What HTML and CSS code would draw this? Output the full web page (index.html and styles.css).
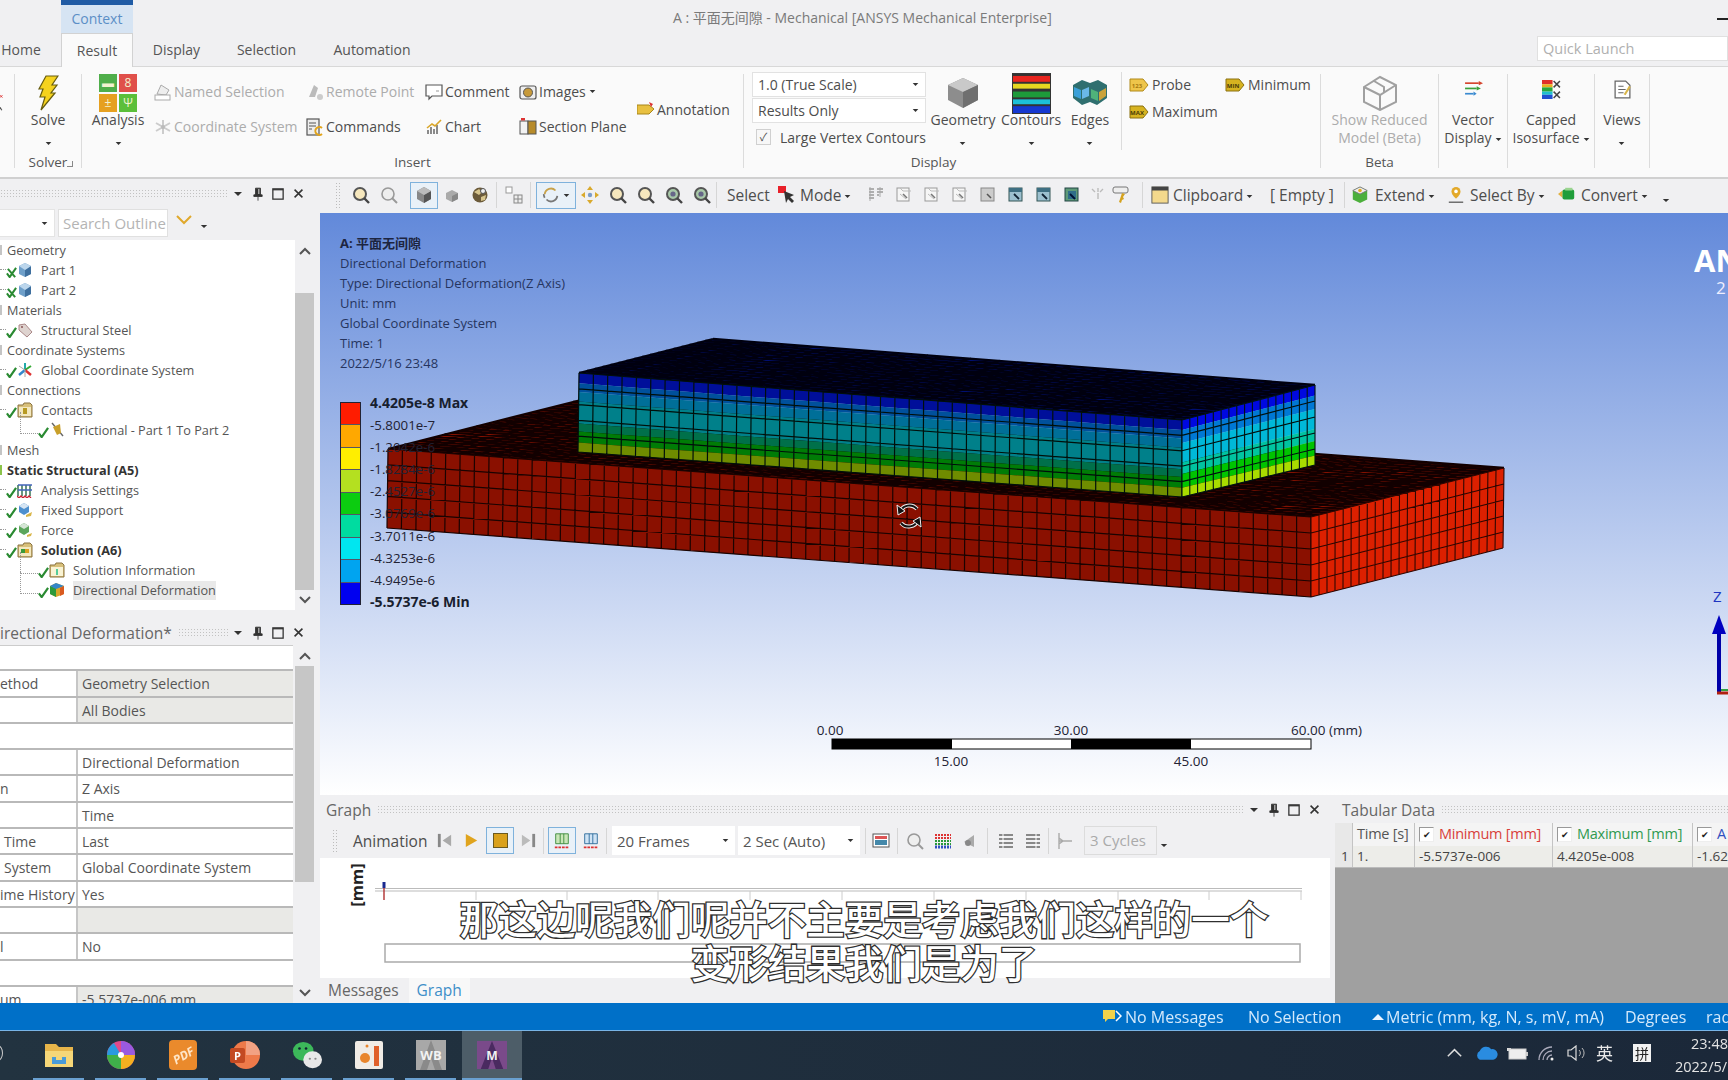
FILE: index.html
```html
<!DOCTYPE html>
<html lang="en">
<head>
<meta charset="utf-8">
<title>A : 平面无间隙 - Mechanical</title>
<link rel="stylesheet" href="styles.css">
</head>
<body>
<svg class="sprite" xmlns="http://www.w3.org/2000/svg">
  <symbol id="mag" viewBox="0 0 18 18"><circle cx="8" cy="8" r="6" fill="#f6e7bd" stroke="#555" stroke-width="2"/><path d="M12 12l5 5" stroke="#444" stroke-width="2.4"/></symbol>
  <symbol id="magg" viewBox="0 0 18 18"><circle cx="8" cy="8" r="6" fill="#eee" stroke="#999" stroke-width="1.6"/><path d="M12 12l5 5" stroke="#999" stroke-width="2"/></symbol>
  <symbol id="magb" viewBox="0 0 18 18"><circle cx="8" cy="8" r="6" fill="#a8c8a8" stroke="#555" stroke-width="2"/><circle cx="8" cy="8" r="2.6" fill="#668"/><path d="M12 12l5 5" stroke="#444" stroke-width="2.4"/></symbol>
  <symbol id="cube" viewBox="0 0 18 18"><path d="M9 1l7 4v8l-7 4-7-4V5z" fill="#888"/><path d="M9 9l7-4v8l-7 4z" fill="#555"/><path d="M9 1l7 4-7 4-7-4z" fill="#bbb"/></symbol>
  <symbol id="cubel" viewBox="0 0 18 18"><path d="M9 4l6 3v6l-6 3-6-3V7z" fill="#aaa"/><path d="M9 10l6-3v6l-6 3z" fill="#888"/></symbol>
  <symbol id="globe" viewBox="0 0 18 18"><circle cx="9" cy="9" r="7.5" fill="#6b5a3a"/><path d="M3 6l5-3 3 3-3 3zM10 11l5-2-1 5-4 1z" fill="#d7c58d"/><circle cx="12" cy="5" r="2.5" fill="#eee" stroke="#555"/></symbol>
  <symbol id="boxes" viewBox="0 0 18 18"><rect x="1" y="1" width="6" height="6" fill="#fff" stroke="#999"/><rect x="9" y="9" width="8" height="8" fill="#eee" stroke="#888"/><path d="M13 9v8M9 13h8" stroke="#888"/></symbol>
  <symbol id="rot" viewBox="0 0 20 20"><path d="M3 9a7 7 0 0 1 12-4" fill="none" stroke="#c8a24a" stroke-width="2"/><path d="M17 11a7 7 0 0 1-12 4" fill="none" stroke="#777" stroke-width="2"/><path d="M3 13a7 7 0 0 1-1-4" fill="none" stroke="#777" stroke-width="2"/></symbol>
  <symbol id="pan" viewBox="0 0 18 18"><path d="M9 0l3 4H6zM9 18l-3-4h6zM0 9l4-3v6zM18 9l-4 3V6z" fill="#d9a92c"/><circle cx="9" cy="9" r="2.2" fill="#7a9ccc"/></symbol>
  <symbol id="mode" viewBox="0 0 18 18"><rect x="0" y="0" width="8" height="7" fill="#e8202a"/><path d="M6 5l10 4-4 2 4 4-2 2-4-4-2 4z" fill="#333"/></symbol>
  <symbol id="sel" viewBox="0 0 18 18"><rect x="2" y="2" width="12" height="13" fill="#f6f6f6" stroke="#999"/><path d="M5 2l3 3h8M5 8l6 5" stroke="#bbb" fill="none"/><path d="M8 8l4 4" stroke="#777" stroke-width="1.6"/></symbol>
  <symbol id="selg" viewBox="0 0 18 18"><rect x="2" y="2" width="13" height="13" fill="#ccc" stroke="#888"/><path d="M8 8l4 4" stroke="#555" stroke-width="1.6"/></symbol>
  <symbol id="selb" viewBox="0 0 18 18"><rect x="2" y="2" width="13" height="13" fill="#9cc0cf" stroke="#355"/><rect x="2" y="2" width="13" height="4" fill="#3e6f82"/><path d="M7 8l5 5" stroke="#123" stroke-width="1.8"/></symbol>
  <symbol id="selgr" viewBox="0 0 18 18"><rect x="2" y="2" width="13" height="13" fill="#5d9a78" stroke="#244"/><rect x="5" y="5" width="8" height="8" fill="#2f6d89"/><path d="M7 8l5 5" stroke="#013" stroke-width="1.8"/></symbol>
  <symbol id="grid4" viewBox="0 0 18 18"><path d="M2 3h5M2 6h5M2 9h5M2 12h5M10 3h6M10 6h6M10 9h2" stroke="#999" stroke-width="1.4"/><path d="M3 1v14M13 1v10" stroke="#aaa"/></symbol>
  <symbol id="xyz" viewBox="0 0 18 18"><path d="M3 3l3 3M9 2v4M14 3l-3 3M9 7v6" stroke="#bbb" stroke-width="1.4"/></symbol>
  <symbol id="key" viewBox="0 0 18 18"><rect x="1" y="1" width="15" height="6" rx="2" fill="#eee" stroke="#777"/><path d="M10 7l-3 9 2 1 1-3 2-1-1-2 2-3z" fill="#d5a21e"/></symbol>
  <symbol id="clip" viewBox="0 0 20 20"><rect x="1" y="1" width="18" height="18" fill="#f4d98c" stroke="#555"/><rect x="1" y="1" width="18" height="4" fill="#444"/></symbol>
  <symbol id="extend" viewBox="0 0 20 20"><path d="M10 1l8 4v10l-8 4-8-4V5z" fill="#4caf3c"/><path d="M10 1l8 4-8 4-8-4z" fill="#eee" stroke="#777"/><circle cx="10" cy="5" r="2" fill="#e5a920"/></symbol>
  <symbol id="pin" viewBox="0 0 18 20"><path d="M9 1a5 5 0 0 1 5 5c0 4-5 8-5 8s-5-4-5-8a5 5 0 0 1 5-5z" fill="#e3a92a"/><circle cx="9" cy="6" r="2" fill="#fff"/><path d="M1 18h16" stroke="#555" stroke-width="1.4"/></symbol>
  <symbol id="conv" viewBox="0 0 20 18"><path d="M0 8l5-4v8z" fill="#e0b040"/><rect x="5" y="3" width="13" height="11" rx="2" fill="#1f9d3a"/><rect x="8" y="1" width="8" height="3" fill="#9ad48f"/></symbol>
  <symbol id="arrowd" viewBox="0 0 10 6"><path d="M1 1h8L5 5z" fill="#333"/></symbol>
  <symbol id="scup" viewBox="0 0 14 10"><path d="M2 8l5-5 5 5" fill="none" stroke="#555" stroke-width="2"/></symbol>
  <symbol id="scdn" viewBox="0 0 14 10"><path d="M2 2l5 5 5-5" fill="none" stroke="#555" stroke-width="2"/></symbol>
  <symbol id="pinbtn" viewBox="0 0 12 16"><path d="M3 1h6v8H3zM1 9h10v2H1zM6 11v5" fill="#333" stroke="#333"/><path d="M7 2v6" stroke="#fff"/></symbol>
  <symbol id="maxb" viewBox="0 0 14 14"><rect x="1" y="1" width="12" height="12" fill="none" stroke="#333" stroke-width="1.5"/><path d="M1 2h12" stroke="#333" stroke-width="1.5"/></symbol>
  <symbol id="closeb" viewBox="0 0 14 14"><path d="M2 2l10 10M12 2L2 12" stroke="#333" stroke-width="2"/></symbol>
  <symbol id="ck" viewBox="0 0 12 12"><path d="M1 7l3 4 7-10" fill="none" stroke="#2a8a32" stroke-width="2.4"/></symbol>
  <symbol id="ckx" viewBox="0 0 12 12"><path d="M1 7l3 4 7-10M2 2l8 9" fill="none" stroke="#2a8a32" stroke-width="2.2"/></symbol>
  <symbol id="part" viewBox="0 0 16 16"><path d="M8 1l6 3v8l-6 3-6-3V4z" fill="#6e9fc9"/><path d="M8 8l6-4v8l-6 3z" fill="#3e6f9e"/><path d="M8 1l6 3-6 4-6-4z" fill="#bcd6ec"/></symbol>
  <symbol id="tag" viewBox="0 0 16 16"><path d="M2 3l6-1 7 8-5 5-8-7z" fill="#ded3cf" stroke="#a88" stroke-width="1"/><circle cx="5" cy="5" r="1" fill="#855"/></symbol>
  <symbol id="coord" viewBox="0 0 16 16"><path d="M8 8V1" stroke="#2aa" stroke-width="2"/><path d="M8 8l6-4" stroke="#3a3" stroke-width="2"/><path d="M8 8l6 5" stroke="#d33" stroke-width="2.4"/><path d="M8 8l-6 5" stroke="#38c" stroke-width="2.4"/><path d="M8 8L2 4M8 8v7" stroke="#aaa"/></symbol>
  <symbol id="fcontact" viewBox="0 0 16 16"><path d="M1 3h5l1-2h6l2 2v12H1z" fill="#d8c07a" stroke="#8a7340"/><rect x="2" y="5" width="12" height="9" fill="#f3e8c0"/><rect x="6" y="6" width="4" height="6" fill="#b79a22"/></symbol>
  <symbol id="fsol" viewBox="0 0 16 16"><path d="M1 3h5l1-2h6l2 2v12H1z" fill="#d8c07a" stroke="#8a7340"/><rect x="2" y="5" width="12" height="9" fill="#f3e8c0"/><rect x="4" y="7" width="4" height="4" fill="#3a9a3a"/><rect x="8" y="7" width="4" height="4" fill="#d8a020"/></symbol>
  <symbol id="finfo" viewBox="0 0 16 16"><path d="M1 3h5l1-2h6l2 2v12H1z" fill="#d8c07a" stroke="#8a7340"/><rect x="2" y="5" width="12" height="9" fill="#f9f3d4"/><rect x="7" y="7" width="2" height="6" fill="#5c9"/></symbol>
  <symbol id="contact" viewBox="0 0 16 16"><path d="M3 1l11 13" stroke="#666" stroke-width="1.4"/><path d="M4 5l7-3 1 9-4 2z" fill="#c9a02a"/></symbol>
  <symbol id="settings" viewBox="0 0 16 16"><path d="M1 3v11M5 3v11M9 3v11M13 3v11" stroke="#2b6a4a" stroke-width="1.4"/><path d="M1 3h14M1 8h14" stroke="#4466bb" stroke-width="1.4"/><path d="M0 14l2 2 2-2 2 2 2-2 2 2 2-2 2 2" fill="none" stroke="#c23" stroke-width="1.3"/></symbol>
  <symbol id="fixed" viewBox="0 0 16 16"><path d="M7 1l5 3v6l-5 3-5-3V4z" fill="#4d8fce"/><path d="M7 1l5 3-5 3-5-3z" fill="#d6e5f3"/><path d="M9 13l6-3-1 4-5 1z" fill="#d9b64a"/></symbol>
  <symbol id="force" viewBox="0 0 16 16"><path d="M7 1l5 3v6l-5 3-5-3V4z" fill="#5ba55b"/><path d="M7 1l5 3-5 3-5-3z" fill="#d6e5d6"/><path d="M10 13l5-2-1 3-4 1z" fill="#d9b64a"/></symbol>
  <symbol id="deform" viewBox="0 0 16 16"><path d="M7 1l8 3v8l-8 3-6-3V4z" fill="#d9a62a"/><path d="M1 4l6 2v9l-6-3z" fill="#2d9a3a"/><path d="M7 1l8 3-8 3-6-3z" fill="#3486c8"/><path d="M11 6l4-2v8l-4 2z" fill="#d95a20"/></symbol>
</svg>

<div class="app">
  <header class="titlebar">
    <div class="ctx">Context</div>
    <div class="wintitle">A : 平面无间隙 - Mechanical [ANSYS Mechanical Enterprise]</div>
    <div class="minbtn"></div>
  </header>
  <nav class="tabs">
    <div class="tab w-home">Home</div>
    <div class="tab active w-result">Result</div>
    <div class="tab w-display">Display</div>
    <div class="tab w-selection">Selection</div>
    <div class="tab w-automation">Automation</div>
    <div class="quick">Quick Launch</div>
  </nav>

  <section class="ribbon">
    <div class="group g-stub"><svg class="stubmag" viewBox="0 0 10 30"><path d="M0 2l4 4M4 2L0 6" stroke="#d33" stroke-width="1.6"/><path d="M0 22l3 5" stroke="#555" stroke-width="2"/></svg></div>
    <div class="vsep"></div>
    <div class="group g-solve">
      <div class="gbody">
        <div class="big w-full">
          <div class="bigicon"><svg class="i-bolt" viewBox="0 0 22 36"><path d="M9 1h12l-6 9h5l-6 8h4L4 35l4-13H3l3-8H2z" fill="#f5d21e" stroke="#665c10" stroke-width="1.2"/></svg></div>
          <div class="biglabel">Solve<svg class="caret cdrop"><use href="#arrowd"/></svg></div>
        </div>
      </div>
      <div class="glabel">Solver<span class="launch"></span></div>
    </div>
    <div class="vsep"></div>
    <div class="group g-insert">
      <div class="gbody">
        <div class="big w-analysis">
          <div class="bigicon"><div class="tiles"><i class="tile t-g">▬</i><i class="tile t-r">8</i><i class="tile t-o">±</i><i class="tile t-g2">Ψ</i></div></div>
          <div class="biglabel">Analysis<svg class="caret cdrop"><use href="#arrowd"/></svg></div>
        </div>
        <div class="smalls">
          <div class="sm dis"><svg class="si" viewBox="0 0 18 18"><path d="M3 11l4-9 8 5-3 5z" fill="#eee" stroke="#aaa"/><rect x="1" y="12" width="15" height="5" fill="#fff" stroke="#aaa"/></svg>Named Selection</div>
          <div class="sm dis"><svg class="si" viewBox="0 0 18 18"><path d="M3 14L8 2l4 3-3 9z" fill="#bbb"/><circle cx="14" cy="14" r="3" fill="#ccc"/></svg>Remote Point</div>
          <div class="sm"><svg class="si" viewBox="0 0 18 18"><path d="M1 2h16v11H7l-3 3v-3H1z" fill="#fff" stroke="#555" stroke-width="1.2"/><path d="M11 8h3" stroke="#999"/></svg>Comment</div>
          <div class="sm"><svg class="si" viewBox="0 0 18 18"><rect x="1" y="3" width="16" height="13" rx="2" fill="#eee" stroke="#555" stroke-width="1.2"/><circle cx="9" cy="9.5" r="4.5" fill="#c79a3a" stroke="#555"/></svg>Images<svg class="caret"><use href="#arrowd"/></svg></div>
          <div class="annot"><svg class="si" viewBox="0 0 18 18"><path d="M0 5h12l5 4-5 5H0z" fill="#e8c040" stroke="#a8861a"/><path d="M12 2l4 2-2 3z" fill="#d33"/></svg>Annotation</div>
          <div class="sm dis"><svg class="si" viewBox="0 0 18 18"><path d="M9 2v14M2 5l14 8M16 5L2 13" stroke="#ccc" stroke-width="2"/><circle cx="9" cy="9" r="2" fill="#bbb"/></svg>Coordinate System</div>
          <div class="sm"><svg class="si" viewBox="0 0 18 18"><rect x="1" y="1" width="12" height="16" fill="#eee" stroke="#555" stroke-width="1.2"/><path d="M3 5h7M3 8h7M3 11h3" stroke="#555"/><path d="M16 10a4 4 0 1 0 0 6" fill="none" stroke="#e2a41b" stroke-width="2"/></svg>Commands</div>
          <div class="sm"><svg class="si" viewBox="0 0 18 18"><path d="M3 16v-4M6 16v-7M9 16v-5M12 16V7" stroke="#666" stroke-width="1.5"/><path d="M2 10l5-4 3 2 6-6" fill="none" stroke="#d9a62a" stroke-width="1.6"/></svg>Chart</div>
          <div class="sm"><svg class="si" viewBox="0 0 18 18"><rect x="1" y="3" width="8" height="13" fill="#f2f2f2" stroke="#555"/><rect x="9" y="3" width="8" height="13" fill="#b78b2a" stroke="#555"/><path d="M2 1h4" stroke="#d33" stroke-width="3"/></svg>Section Plane</div>
        </div>
      </div>
      <div class="glabel lbl-insert">Insert</div>
    </div>
    <div class="vsep"></div>
    <div class="group g-display">
      <div class="gbody">
        <div class="combos">
          <div class="combo">1.0 (True Scale)<svg class="caret end"><use href="#arrowd"/></svg></div>
          <div class="combo">Results Only<svg class="caret end"><use href="#arrowd"/></svg></div>
          <label class="chk"><span class="cbox">✓</span>Large Vertex Contours</label>
        </div>
        <div class="big w-geom">
          <div class="bigicon"><svg class="i-geom" viewBox="0 0 32 30"><path d="M16 0l15 7v15l-15 8-15-8V7z" fill="#8d8d8d"/><path d="M16 0l15 7-15 7L1 7z" fill="#c9c9c9"/><path d="M16 14l15-7v15l-15 8z" fill="#6f6f6f"/></svg></div>
          <div class="biglabel">Geometry<svg class="caret cdrop"><use href="#arrowd"/></svg></div>
        </div>
        <div class="big w-cont">
          <div class="bigicon"><svg class="i-cont" viewBox="0 0 40 42"><rect width="40" height="42" fill="#333"/><rect x="1" y="3" width="38" height="6" fill="#e8251f"/><rect x="1" y="11" width="38" height="5" fill="#e6d820"/><rect x="1" y="19" width="38" height="6" fill="#1d9a3a"/><rect x="1" y="27" width="38" height="5" fill="#1cc0d8"/><rect x="1" y="34" width="38" height="7" fill="#1638d0"/></svg></div>
          <div class="biglabel">Contours<svg class="caret cdrop"><use href="#arrowd"/></svg></div>
        </div>
        <div class="big w-edges">
          <div class="bigicon"><svg class="i-edges" viewBox="0 0 36 30"><path d="M10 2l8 3 8-3 9 5v13l-10 7-7-3-8 3L1 20V7z" fill="#2f6f6f"/><path d="M2 9l7 3v9l-7-3z" fill="#3aa0d8"/><path d="M10 12l7-3v9l-7 3z" fill="#6ab8e8"/><path d="M19 11l7 3v9l-7-3z" fill="#4fb27a"/><path d="M27 14l7-4v8l-7 5z" fill="#c9a23a"/></svg></div>
          <div class="biglabel">Edges<svg class="caret cdrop"><use href="#arrowd"/></svg></div>
        </div>
      </div>
      <div class="glabel lbl-display">Display</div>
    </div>
    <div class="vsep short"></div>
    <div class="group g-results">
      <div class="probes">
        <div class="sm"><svg class="si2" viewBox="0 0 20 16"><path d="M1 2h13l5 6-5 6H1z" fill="#efc54a" stroke="#b08a1a"/><text class="tagt" x="8" y="11" text-anchor="middle" fill="#a87a10">123</text></svg>Probe</div>
        <div class="sm"><svg class="si2" viewBox="0 0 20 16"><path d="M1 2h13l5 6-5 6H1z" fill="#d7b320" stroke="#8a7010"/><text class="tagt" x="8" y="11" text-anchor="middle" fill="#4a3c08">MIN</text></svg>Minimum</div>
        <div class="sm"><svg class="si2" viewBox="0 0 20 16"><path d="M1 2h13l5 6-5 6H1z" fill="#d7b320" stroke="#8a7010"/><text class="tagt" x="8" y="11" text-anchor="middle" fill="#4a3c08">MAX</text></svg>Maximum</div>
      </div>
    </div>
    <div class="vsep"></div>
    <div class="group g-beta">
      <div class="gbody">
        <div class="big w-full">
          <div class="bigicon"><svg class="i-red" viewBox="0 0 36 36"><path d="M2 12L18 2l16 8v17L18 35 2 27zM2 12l16 8 16-10M18 20v15M12 6l10 6v6" fill="none" stroke="#a0a0a0" stroke-width="2"/></svg></div>
          <div class="biglabel dis">Show Reduced<br>Model (Beta)</div>
        </div>
      </div>
      <div class="glabel">Beta</div>
    </div>
    <div class="vsep"></div>
    <div class="group g-vector">
      <div class="gbody">
        <div class="big w-full">
          <div class="bigicon"><svg class="i-sm" viewBox="0 0 18 16"><path d="M1 2h13" stroke="#d5452e" stroke-width="1.6"/><path d="M14 0l4 2-4 2z" fill="#d5452e"/><path d="M1 7h11" stroke="#3aa03a" stroke-width="1.6"/><path d="M12 5l4 2-4 2z" fill="#3aa03a"/><path d="M1 12h8" stroke="#3a8ad0" stroke-width="1.6"/><path d="M9 10l3 2-3 2z" fill="#3a8ad0"/></svg></div>
          <div class="biglabel">Vector<br>Display<svg class="caret"><use href="#arrowd"/></svg></div>
        </div>
      </div>
    </div>
    <div class="vsep"></div>
    <div class="group g-capped">
      <div class="gbody">
        <div class="big w-full">
          <div class="bigicon"><svg class="i-sm" viewBox="0 0 18 18"><rect x="0" y="0" width="10" height="4" fill="#e0302a"/><rect x="0" y="4" width="10" height="3" fill="#e8b020"/><rect x="0" y="7" width="10" height="4" fill="#2aa83a"/><rect x="0" y="11" width="10" height="3" fill="#20c0d0"/><rect x="0" y="14" width="10" height="4" fill="#2050d0"/><path d="M11 1l6 6M17 1l-6 6M11 11l6 6M17 11l-6 6" stroke="#444" stroke-width="1.4"/></svg></div>
          <div class="biglabel">Capped<br>Isosurface<svg class="caret"><use href="#arrowd"/></svg></div>
        </div>
      </div>
    </div>
    <div class="vsep"></div>
    <div class="group g-views">
      <div class="gbody">
        <div class="big w-full">
          <div class="bigicon"><svg class="i-sm" viewBox="0 0 18 18"><path d="M2 1h10l4 4v12H2z" fill="#fff" stroke="#666" stroke-width="1.2"/><path d="M5 6h5M5 9h7M5 12h5" stroke="#666"/><path d="M16 6l-5 8" stroke="#d9b64a" stroke-width="2"/></svg></div>
          <div class="biglabel">Views<svg class="caret cdrop"><use href="#arrowd"/></svg></div>
        </div>
      </div>
    </div>
    <div class="vsep"></div>
  </section>

  <main class="main">
    <aside class="left">
      <div class="phead ph-outline">
        <div class="grip"></div>
        <svg class="pb-caret"><use href="#arrowd"/></svg>
        <svg class="pb-pin"><use href="#pinbtn"/></svg>
        <svg class="pb-max"><use href="#maxb"/></svg>
        <svg class="pb-close"><use href="#closeb"/></svg>
      </div>
      <div class="filter">
        <div class="fcombo"><svg class="caret end"><use href="#arrowd"/></svg></div>
        <div class="fsearch">Search Outline</div>
        <svg class="chev" viewBox="0 0 16 10"><path d="M1 1l7 7 7-7" fill="none" stroke="#e0a92c" stroke-width="2"/></svg>
        <svg class="fover"><use href="#arrowd"/></svg>
      </div>
      <div class="treewrap">
        <div class="tree">
          <div class="row l0"><i class="nub"></i>Geometry</div>
          <div class="row l1"><i class="dash"></i><svg class="st"><use href="#ckx"/></svg><svg class="ni"><use href="#part"/></svg>Part 1</div>
          <div class="row l1"><i class="dash"></i><svg class="st"><use href="#ckx"/></svg><svg class="ni"><use href="#part"/></svg>Part 2</div>
          <div class="row l0"><i class="nub"></i>Materials</div>
          <div class="row l1"><i class="dash"></i><svg class="st"><use href="#ck"/></svg><svg class="ni"><use href="#tag"/></svg>Structural Steel</div>
          <div class="row l0"><i class="nub"></i>Coordinate Systems</div>
          <div class="row l1"><i class="dash"></i><svg class="st"><use href="#ck"/></svg><svg class="ni"><use href="#coord"/></svg>Global Coordinate System</div>
          <div class="row l0"><i class="nub"></i>Connections</div>
          <div class="row l1"><i class="dash"></i><svg class="st"><use href="#ck"/></svg><svg class="ni"><use href="#fcontact"/></svg>Contacts</div>
          <div class="row l2"><i class="dash2"></i><svg class="st"><use href="#ck"/></svg><svg class="ni"><use href="#contact"/></svg>Frictional - Part 1 To Part 2</div>
          <div class="row l0"><i class="nub"></i>Mesh</div>
          <div class="row l0 bold"><i class="nub g"></i>Static Structural (A5)</div>
          <div class="row l1"><i class="dash"></i><svg class="st"><use href="#ck"/></svg><svg class="ni"><use href="#settings"/></svg>Analysis Settings</div>
          <div class="row l1"><i class="dash"></i><svg class="st"><use href="#ck"/></svg><svg class="ni"><use href="#fixed"/></svg>Fixed Support</div>
          <div class="row l1"><i class="dash"></i><svg class="st"><use href="#ck"/></svg><svg class="ni"><use href="#force"/></svg>Force</div>
          <div class="row l1 bold"><i class="dash"></i><svg class="st"><use href="#ck"/></svg><svg class="ni"><use href="#fsol"/></svg>Solution (A6)</div>
          <div class="row l2"><i class="dash2"></i><svg class="st"><use href="#ck"/></svg><svg class="ni"><use href="#finfo"/></svg>Solution Information</div>
          <div class="row l2"><i class="dash2"></i><svg class="st"><use href="#ck"/></svg><svg class="ni"><use href="#deform"/></svg><span class="picked">Directional Deformation</span></div>
        </div>
        <div class="scroll sc-tree"><div class="sbtn"><svg class="schev"><use href="#scup"/></svg></div><div class="track"><div class="thumb th-tree"></div></div><div class="sbtn"><svg class="schev"><use href="#scdn"/></svg></div></div>
      </div>

      <div class="phead ph-detail">
        <div class="ptitle">irectional Deformation*</div>
        <div class="grip"></div>
        <svg class="pb-caret"><use href="#arrowd"/></svg>
        <svg class="pb-pin"><use href="#pinbtn"/></svg>
        <svg class="pb-max"><use href="#maxb"/></svg>
        <svg class="pb-close"><use href="#closeb"/></svg>
      </div>
      <div class="detailwrap">
        <div class="details">
          <div class="drow span"></div>
          <div class="drow"><div class="dl">ethod</div><div class="dv gr">Geometry Selection</div></div>
          <div class="drow"><div class="dl"></div><div class="dv gr">All Bodies</div></div>
          <div class="drow span"></div>
          <div class="drow"><div class="dl"></div><div class="dv">Directional Deformation</div></div>
          <div class="drow"><div class="dl">n</div><div class="dv">Z Axis</div></div>
          <div class="drow"><div class="dl"></div><div class="dv">Time</div></div>
          <div class="drow"><div class="dl ind">Time</div><div class="dv">Last</div></div>
          <div class="drow"><div class="dl ind">System</div><div class="dv">Global Coordinate System</div></div>
          <div class="drow"><div class="dl">ime History</div><div class="dv">Yes</div></div>
          <div class="drow"><div class="dl"></div><div class="dv gr"></div></div>
          <div class="drow"><div class="dl">l</div><div class="dv">No</div></div>
          <div class="drow span"></div>
          <div class="drow"><div class="dl">um</div><div class="dv gr">-5.5737e-006 mm</div></div>
        </div>
        <div class="scroll sc-detail"><div class="sbtn"><svg class="schev"><use href="#scup"/></svg></div><div class="track"><div class="thumb th-detail"></div></div><div class="sbtn"><svg class="schev"><use href="#scdn"/></svg></div></div>
      </div>
    </aside>

    <section class="right">
      <div class="toolbar">
        <div class="vgrip"></div>
        <div class="tb"><svg class="ti"><use href="#mag"/></svg></div>
        <div class="tb"><svg class="ti"><use href="#magg"/></svg></div>
        <div class="tb on m7"><svg class="ti"><use href="#cube"/></svg></div>
        <div class="tb"><svg class="ti"><use href="#cubel"/></svg></div>
        <div class="tb"><svg class="ti"><use href="#globe"/></svg></div>
        <div class="tsep ts-0"></div>
        <div class="tb n18 m8"><svg class="ti"><use href="#boxes"/></svg></div>
        <div class="tsep ts-a"></div>
        <div class="tb on w40"><svg class="ti"><use href="#rot"/></svg><svg class="caret"><use href="#arrowd"/></svg></div>
        <div class="tb"><svg class="ti"><use href="#pan"/></svg></div>
        <div class="tb"><svg class="ti"><use href="#mag"/></svg></div>
        <div class="tb"><svg class="ti"><use href="#mag"/></svg></div>
        <div class="tb"><svg class="ti"><use href="#magb"/></svg></div>
        <div class="tb"><svg class="ti"><use href="#magb"/></svg></div>
        <div class="tsep"></div>
        <div class="tt w62 pl10">Select</div>
        <div class="tb n16"><svg class="ti"><use href="#mode"/></svg></div>
        <div class="tt w57 pl5">Mode<svg class="caret"><use href="#arrowd"/></svg></div>
        <div class="tb m10"><svg class="ti"><use href="#grid4"/></svg></div>
        <div class="tb"><svg class="ti"><use href="#sel"/></svg></div>
        <div class="tb"><svg class="ti"><use href="#sel"/></svg></div>
        <div class="tb"><svg class="ti"><use href="#sel"/></svg></div>
        <div class="tb"><svg class="ti"><use href="#selg"/></svg></div>
        <div class="tb"><svg class="ti"><use href="#selb"/></svg></div>
        <div class="tb"><svg class="ti"><use href="#selb"/></svg></div>
        <div class="tb"><svg class="ti"><use href="#selgr"/></svg></div>
        <div class="tb n24"><svg class="ti"><use href="#xyz"/></svg></div>
        <div class="tb n22"><svg class="ti"><use href="#key"/></svg></div>
        <div class="tsep ts-c"></div>
        <div class="tb n27"><svg class="ti"><use href="#clip"/></svg></div>
        <div class="tt w89">Clipboard<svg class="caret"><use href="#arrowd"/></svg></div>
        <div class="tt w82 pl8">[ Empty ]</div>
        <div class="tsep"></div>
        <div class="tb n30"><svg class="ti"><use href="#extend"/></svg></div>
        <div class="tt w66">Extend<svg class="caret"><use href="#arrowd"/></svg></div>
        <div class="tb n29"><svg class="ti"><use href="#pin"/></svg></div>
        <div class="tt w83">Select By<svg class="caret"><use href="#arrowd"/></svg></div>
        <div class="tb n28"><svg class="ti"><use href="#conv"/></svg></div>
        <div class="tt w74">Convert<svg class="caret"><use href="#arrowd"/></svg></div>
        <svg class="tover"><use href="#arrowd"/></svg>
      </div>

      <div class="viewport">
        <div class="anno">
          <div class="anno-b">A: 平面无间隙</div>
          <div>Directional Deformation</div>
          <div>Type: Directional Deformation(Z Axis)</div>
          <div>Unit: mm</div>
          <div>Global Coordinate System</div>
          <div>Time: 1</div>
          <div>2022/5/16 23:48</div>
        </div>
        <svg class="model" viewBox="320 213 1408 582" xmlns="http://www.w3.org/2000/svg">
          <g id="mesh"></g>
          <g class="cursor" fill="none">
            <path d="M900 512a10 10 0 0 1 17-3" stroke="#eee" stroke-width="4"/>
            <path d="M918 520a10 10 0 0 1-17 3" stroke="#eee" stroke-width="4"/>
            <path d="M900 512a10 10 0 0 1 17-3" stroke="#111" stroke-width="2"/>
            <path d="M918 520a10 10 0 0 1-17 3" stroke="#111" stroke-width="2"/>
            <path d="M897 505l1 10 7-4z" fill="#111" stroke="#eee"/>
            <path d="M921 527l-1-10-7 4z" fill="#111" stroke="#eee"/>
          </g>
          <g class="scalebar">
            <rect x="832" y="739" width="479" height="10" fill="#fff" stroke="#000"/>
            <rect x="832" y="739" width="120" height="10" fill="#000"/>
            <rect x="1071" y="739" width="120" height="10" fill="#000"/>
            <text x="830" y="735" text-anchor="middle">0.00</text>
            <text x="1071" y="735" text-anchor="middle">30.00</text>
            <text x="1291" y="735">60.00 (mm)</text>
            <text x="951" y="766" text-anchor="middle">15.00</text>
            <text x="1191" y="766" text-anchor="middle">45.00</text>
          </g>
          <g class="triad">
            <text class="zlabel" x="1713" y="602">Z</text>
            <path d="M1719 692V630" stroke="#0000a8" stroke-width="4"/>
            <path d="M1719 615l-7 19h14z" fill="#0000c0"/>
            <path d="M1717 693h11" stroke="#b02010" stroke-width="3"/>
            <path d="M1721 690h7" stroke="#30a040" stroke-width="2"/>
          </g>
        </svg>
        <div class="legend">
          <div class="lbar"><i class="c1"></i><i class="c2"></i><i class="c3"></i><i class="c4"></i><i class="c5"></i><i class="c6"></i><i class="c7"></i><i class="c8"></i><i class="c9"></i></div>
          <div class="lvals">
            <b>4.4205e-8 Max</b><span>-5.8001e-7</span><span>-1.2042e-6</span><span>-1.8284e-6</span><span>-2.4527e-6</span><span>-3.0769e-6</span><span>-3.7011e-6</span><span>-4.3253e-6</span><span>-4.9495e-6</span><b>-5.5737e-6 Min</b>
          </div>
        </div>
        <div class="logo"><div class="logo-a">AN</div><div class="logo-v">2</div></div>
      </div>

      <div class="bottom">
        <section class="graph">
          <div class="phead ph-graph">
            <div class="ptitle">Graph</div>
            <div class="grip"></div>
            <svg class="pb-caret"><use href="#arrowd"/></svg>
            <svg class="pb-pin"><use href="#pinbtn"/></svg>
            <svg class="pb-max"><use href="#maxb"/></svg>
            <svg class="pb-close"><use href="#closeb"/></svg>
          </div>
          <div class="anim">
            <div class="vgrip g2"></div>
            <div class="tt w83">Animation</div>
            <svg class="ai" viewBox="0 0 18 18"><path d="M2 2h3v14H2z" fill="#888"/><path d="M16 3v12L7 9z" fill="#aaa"/></svg>
            <svg class="ai ml10" viewBox="0 0 14 18"><path d="M1 2v14l12-7z" fill="#e0a41e"/></svg>
            <div class="tb on w28 ml6"><i class="stop"></i></div>
            <svg class="ai ml6" viewBox="0 0 18 18"><path d="M2 3v12l9-6z" fill="#bbb"/><path d="M13 2h3v14h-3z" fill="#888"/></svg>
            <div class="tsep ml6"></div>
            <div class="tb on w28 ml4"><svg class="ti" viewBox="0 0 20 20"><path d="M3 2h14v11H3z" fill="#c9e6b8" stroke="#3a8a3a"/><path d="M8 2v11M12 2v11" stroke="#3a8a3a"/><path d="M2 17h16" stroke="#d33" stroke-width="2" stroke-dasharray="3 1"/></svg></div>
            <div class="tb w22 ml4"><svg class="ti" viewBox="0 0 20 20"><path d="M3 2h14v11H3z" fill="#cfe3f4" stroke="#2a6a9a"/><path d="M8 2v11M12 2v11" stroke="#2a6a9a"/><path d="M2 17h16" stroke="#d33" stroke-width="2" stroke-dasharray="3 1"/></svg></div>
            <div class="tsep ml4"></div>
            <div class="acombo a1">20 Frames<svg class="caret end"><use href="#arrowd"/></svg></div>
            <div class="acombo a2">2 Sec (Auto)<svg class="caret end"><use href="#arrowd"/></svg></div>
            <div class="tsep ml5"></div>
            <div class="tb w22 ml4"><svg class="ti" viewBox="0 0 18 18"><rect x="1" y="2" width="16" height="13" fill="#fff" stroke="#555"/><rect x="3" y="4" width="12" height="3" fill="#d55"/><rect x="3" y="8" width="12" height="5" fill="#48a"/></svg></div>
            <div class="tsep ml5"></div>
            <div class="tb w26 ml4"><svg class="ti"><use href="#magg"/></svg></div>
            <div class="tb w26 ml2"><svg class="ti" viewBox="0 0 18 18"><path d="M1 3h16M1 6h16" stroke="#d33" stroke-width="2" stroke-dasharray="2 1"/><path d="M1 9h16M1 12h16" stroke="#2a9a3a" stroke-width="2" stroke-dasharray="2 1"/><path d="M1 15h16" stroke="#3050c0" stroke-width="3" stroke-dasharray="2 1"/></svg></div>
            <div class="tb w28 ml1"><svg class="ti" viewBox="0 0 18 18"><path d="M2 10l10-7v12z" fill="#aaa"/><circle cx="6" cy="11" r="3" fill="#888"/></svg></div>
            <div class="tsep ml2"></div>
            <div class="tb w28 ml4"><svg class="ti" viewBox="0 0 18 18"><path d="M2 3h14M2 7h14M2 11h14M2 15h14" stroke="#888" stroke-width="2"/><path d="M6 2v14" stroke="#fff"/></svg></div>
            <div class="tb w26"><svg class="ti" viewBox="0 0 18 18"><path d="M2 3h14M2 7h14M2 11h14M2 15h14" stroke="#888" stroke-width="2"/><path d="M12 2v14" stroke="#fff"/></svg></div>
            <div class="tsep ml2"></div>
            <div class="tb w26 ml2"><svg class="ti" viewBox="0 0 18 18"><path d="M4 1v16M4 9h13M4 6l4 3-4 3" stroke="#aaa" fill="none" stroke-width="1.4"/></svg></div>
            <div class="cycles">3 Cycles</div>
            <svg class="tover small"><use href="#arrowd"/></svg>
          </div>
          <div class="chart">
            <svg class="chartsvg" viewBox="320 858 1010 120" xmlns="http://www.w3.org/2000/svg">
              <text class="mm" transform="translate(363 885) rotate(-90)" text-anchor="middle">[mm]</text>
              <path d="M375 888.5h927M375 891h927" stroke="#bbb"/>
              <path d="M476 891v9M567 891v9M658 891v9M750 891v9M842 891v9M934 891v9M1026 891v9M1118 891v9M1209 891v9M1301 891v9" stroke="#ccc"/>
              <path d="M384 882v6" stroke="#1a2a90" stroke-width="3"/>
              <path d="M384 888v12" stroke="#b03030" stroke-width="1.4"/>
              <rect x="385" y="944" width="915" height="18" fill="#fff" stroke="#aaa" stroke-width="1.5"/>
            </svg>
          </div>
          <div class="gtabs">
            <div class="gtab">Messages</div>
            <div class="gtab cur">Graph</div>
          </div>
        </section>
        <section class="tabular">
          <div class="phead ph-tab">
            <div class="ptitle">Tabular Data</div>
            <div class="grip"></div>
          </div>
          <div class="tdata">
            <div class="thr">
              <div class="tc c0"></div>
              <div class="tc c1w">Time [s]</div>
              <div class="tc c2w"><span class="tck">✔</span><span class="red">Minimum [mm]</span></div>
              <div class="tc c3w"><span class="tck">✔</span><span class="grn">Maximum [mm]</span></div>
              <div class="tc c4w"><span class="tck">✔</span><span class="blu">A</span></div>
            </div>
            <div class="tbr">
              <div class="tc c0">1</div>
              <div class="tc c1w">1.</div>
              <div class="tc c2w">-5.5737e-006</div>
              <div class="tc c3w">4.4205e-008</div>
              <div class="tc c4w">-1.62</div>
            </div>
            <div class="tempty"></div>
          </div>
        </section>
      </div>
    </section>
  </main>

  <footer class="status">
    <svg class="si3" viewBox="0 0 20 18"><path d="M1 2h12v9H6l-3 3v-3H1z" fill="#f2d24a"/><path d="M14 3l5 5-5 5" fill="none" stroke="#fff" stroke-width="1.5"/></svg>
    <div class="st-t s-msg">No Messages</div>
    <div class="st-t s-sel">No Selection</div>
    <i class="st-tri"></i>
    <div class="st-t s-met">Metric (mm, kg, N, s, mV, mA)</div>
    <div class="st-t s-deg">Degrees</div>
    <div class="st-t">rad</div>
  </footer>

  <footer class="taskbar">
    <i class="searchring"></i>
    <div class="appi first"><svg viewBox="0 0 30 30"><path d="M1 4h11l3 3h14v20H1z" fill="#e7b54a"/><path d="M1 11h28v16H1z" fill="#f6d778"/><path d="M8 17h14v7H8z" fill="#4a9bd8"/><path d="M12 17h6v3h-6z" fill="#f6d778"/></svg></div>
    <div class="appi"><svg viewBox="0 0 30 30"><circle cx="15" cy="15" r="14" fill="#e24a8a"/><path d="M15 1a14 14 0 0 1 14 14H15z" fill="#9a5ae0"/><path d="M29 15a14 14 0 0 1-14 14V15z" fill="#f4b020"/><path d="M15 29A14 14 0 0 1 1 15h14z" fill="#3fb04a"/><path d="M1 15A14 14 0 0 1 8 3l7 12z" fill="#2a9ae0"/><circle cx="15" cy="15" r="3" fill="#fff"/></svg></div>
    <div class="appi"><svg viewBox="0 0 30 30"><rect x="1" y="0" width="28" height="30" rx="4" fill="#ea8a2c"/><text class="pdf" x="15" y="20" text-anchor="middle" transform="rotate(-30 15 15)">PDF</text></svg></div>
    <div class="appi"><svg viewBox="0 0 30 30"><circle cx="16" cy="15" r="14" fill="#ee7a4a"/><path d="M16 1a14 14 0 0 1 14 14H16z" fill="#f2a283"/><rect x="0" y="8" width="15" height="15" rx="2" fill="#c34a22"/><text class="ppt" x="7.5" y="20" text-anchor="middle">P</text></svg></div>
    <div class="appi"><svg viewBox="0 0 32 30"><ellipse cx="12" cy="11" rx="11" ry="10" fill="#3cb85a"/><ellipse cx="22" cy="20" rx="10" ry="9" fill="#e8e8e8"/><circle cx="8" cy="8" r="1.4" fill="#123"/><circle cx="15" cy="8" r="1.4" fill="#123"/><circle cx="19" cy="19" r="1.2" fill="#888"/><circle cx="25" cy="19" r="1.2" fill="#888"/></svg></div>
    <div class="appi"><svg viewBox="0 0 30 30"><rect x="1" y="1" width="28" height="28" rx="2" fill="#f0ece6"/><circle cx="11" cy="18" r="5" fill="#e8852c"/><rect x="20" y="6" width="5" height="20" fill="#e0602a"/><circle cx="13" cy="6" r="1.5" fill="#e8852c"/></svg></div>
    <div class="appi"><svg viewBox="0 0 30 30"><rect width="30" height="30" fill="#a8a8a8"/><path d="M15 0L4 30h7l4-12 4 12h7z" fill="#8a8a8a"/><text class="wb" x="15" y="20" text-anchor="middle">WB</text></svg></div>
    <div class="appi act"><svg viewBox="0 0 32 30"><rect width="32" height="30" fill="#7a4a8a"/><path d="M16 0L4 30h8l4-12 4 12h8z" fill="#4a2a60"/><text class="wb" x="16" y="20" text-anchor="middle">M</text></svg></div>
    <div class="tray">
      <svg class="tr-chev" viewBox="0 0 20 12"><path d="M2 10l8-8 8 8" fill="none" stroke="#ddd" stroke-width="1.8"/></svg>
      <svg class="tr-cloud" viewBox="0 0 24 14"><path d="M5 14a5 5 0 0 1 0-9 7 7 0 0 1 12-2 5 5 0 0 1 2 11z" fill="#2a8ce0"/></svg>
      <svg class="tr-bat" viewBox="0 0 22 14"><path d="M1 2h4v3H1z" fill="#ddd"/><rect x="3" y="3" width="17" height="10" fill="#eee" stroke="#ccc"/><rect x="20" y="6" width="2" height="4" fill="#ccc"/></svg>
      <svg class="tr-wifi" viewBox="0 0 20 16"><path d="M2 15A13 13 0 0 1 15 2M6 15a9 9 0 0 1 9-9M10 15a5 5 0 0 1 5-5" fill="none" stroke="#aab" stroke-width="1.3"/><circle cx="15" cy="14" r="1.5" fill="#eee"/></svg>
      <svg class="tr-vol" viewBox="0 0 20 16"><path d="M2 5h3l5-4v14l-5-4H2z" fill="none" stroke="#ddd" stroke-width="1.2"/><path d="M13 5a4 4 0 0 1 0 6M16 3a7 7 0 0 1 0 10" fill="none" stroke="#bbb"/></svg>
      <div class="ime">英</div>
      <div class="ime2">拼</div>
      <div class="clock"><div class="ck-t">23:48</div><div class="ck-d">2022/5/16</div></div>
    </div>
  </footer>

  <div class="captions">
    <div>那这边呢我们呢并不主要是考虑我们这样的一个</div>
    <div>变形结果我们是为了</div>
  </div>
</div>
<script src="script.js"></script>
</body>
</html>
```
FILE: styles.css
```css
*{box-sizing:border-box}
html,body{margin:0;padding:0;width:1728px;height:1080px;overflow:hidden;background:#f0f0f2}
body{font-family:"Open Sans","Noto Sans CJK SC",sans-serif;font-size:14px;color:#555}
.sprite{display:none}
.app{position:relative;width:1728px;height:1080px;display:flex;flex-direction:column;overflow:hidden;filter:blur(.45px)}

/* title */
.titlebar{height:33px;display:flex;background:#f0f0f2;flex:none}
.ctx{margin-left:61px;width:72px;height:33px;background:#d6e4f3;border-top:5px solid #1f5ba5;color:#5c8fc6;text-align:center;line-height:27px;font-size:14px}
.wintitle{margin-left:540px;line-height:35px;font-size:14px;color:#7a7a7a;white-space:nowrap;width:600px}
.minbtn{width:11px;height:2px;background:#222;margin:18px 0 0 445px}

.tabs{height:33px;display:flex;align-items:stretch;background:#f0f0f2;flex:none;position:relative}
.tab{text-align:center;line-height:34px;font-size:14px;color:#555}
.w-home{width:60px;padding-right:18px}
.w-result{width:72px;margin-left:1px}
.w-display{width:87px}
.w-selection{width:93px}
.w-automation{width:118px}
.tab.active{background:#fafafa;border:1px solid #d2d2d2;border-bottom:none;margin-bottom:-1px;position:relative}
.quick{margin-left:auto;margin-top:3px;width:191px;height:25px;background:#fff;border:1px solid #e0e0e0;color:#b0b0b0;padding-left:5px;line-height:23px;font-size:14.5px}

/* ribbon */
.ribbon{height:113px;flex:none;display:flex;background:#fafafa;border-top:1px solid #d8d8d8;border-bottom:2px solid #d0d0d0}
.group{display:flex;flex-direction:column;height:110px}
.vsep{width:1px;height:94px;margin-top:7px;background:#dcdcdc;flex:none}
.vsep.short{height:78px;margin-top:5px}
.gbody{height:87px;display:flex}
.glabel{height:16px;line-height:16px;text-align:center;font-size:13.5px;position:relative;color:#555}
.lbl-display{padding-left:2px;width:100%}
.g-stub{width:14px}
.stubmag{width:6px;height:44px;margin-top:14px}
.g-solve{width:66px}
.g-insert{width:661px}
.g-display{width:377px}
.g-results{width:198px}
.g-beta{width:117px}
.g-vector{width:68px}
.g-capped{width:86px}
.g-views{width:54px}
.launch{position:absolute;right:8px;bottom:3px;width:6px;height:6px;border:1px solid #888;border-top:none;border-left:none}
.big{display:flex;flex-direction:column;align-items:center;padding-top:8px;flex:none}
.w-full{width:100%}
.w-analysis{width:72px}
.w-geom{width:72px}
.w-cont{width:64px}
.w-edges{width:54px}
.bigicon{height:36px;display:flex;align-items:center;justify-content:center;flex:none}
.biglabel{line-height:18px;text-align:center;font-size:14px;position:relative;white-space:nowrap;color:#4d4d4d}
.dis{color:#acacac}
.caret{width:7px;height:5px;margin-left:3px;vertical-align:middle}
.cdrop{display:block;margin:12px auto 0}
.i-bolt{width:22px;height:36px}
.i-geom{width:32px;height:30px}
.i-cont{width:39px;height:41px}
.i-edges{width:36px;height:30px}
.i-red{width:36px;height:36px}
.i-sm{width:19px;height:19px;margin-top:-7px}
.tiles{display:grid;grid-template-columns:18px 18px;grid-auto-rows:18px;gap:2px}
.tile{display:block;font-style:normal;font-size:12px;line-height:18px;text-align:center;color:#f2f2d0}
.t-g{background:#4fae4a}.t-r{background:#e0504a}.t-o{background:#e6a020}.t-g2{background:#5cbf3a}

.smalls{display:grid;grid-template-columns:152px 119px 94px 118px 106px;grid-template-rows:35px 35px;padding-top:7px;height:86px}
.sm{display:flex;align-items:center;white-space:nowrap;font-size:14px;color:#4d4d4d}
.sm.dis{color:#acacac}
.si{width:18px;height:18px;margin-right:2px;flex:none}
.si2{width:20px;height:16px;margin-right:3px;flex:none}
.tagt{font:700 6px "Open Sans",sans-serif}
.annot{display:flex;align-items:center;grid-column:5;grid-row:1/span 2;white-space:nowrap;font-size:14px;color:#4d4d4d}
.combos{width:174px;margin:5px 0 0 8px;flex:none;margin-right:1px}
.combo{height:25px;margin-bottom:1px;background:#fff;border:1px solid #e2e2e2;padding-left:5px;line-height:23px;display:flex;justify-content:space-between;align-items:center;color:#4d4d4d;font-size:14px}
.caret.end{margin-right:6px}
.chk{display:flex;align-items:center;height:18px;margin-top:5px;padding-left:4px;white-space:nowrap;color:#4d4d4d;font-size:14px}
.cbox{width:15px;height:16px;border:1px solid #d0d0d0;background:#f7f7f7;margin-right:9px;font-size:11px;line-height:14px;text-align:center}
.probes{display:grid;grid-template-columns:96px 90px;grid-template-rows:27px 27px;padding:4px 0 0 7px}

/* main */
.main{height:824px;display:flex;flex:none;background:#f0f0f2}
.left{width:320px;flex:none;display:flex;flex-direction:column;background:#f0f0f2}
.right{width:1408px;display:flex;flex-direction:column}
.phead{display:flex;align-items:center;flex:none}
.grip{flex:1;height:9px;background-image:radial-gradient(#c2c2c2 .7px,transparent .8px);background-size:3px 3px}
.ptitle{white-space:nowrap;padding-right:6px;color:#666;font-size:15.5px}
.pb-caret{width:10px;height:6px;margin-left:4px}
.pb-pin{width:10px;height:14px;margin-left:10px}
.pb-max{width:12px;height:12px;margin-left:9px}
.pb-close{width:11px;height:11px;margin-left:9px;margin-right:16px}
.ph-outline{height:29px}
.ph-detail{height:25px;margin-top:10px}
.filter{height:32px;display:flex;align-items:center;padding-bottom:2px}
.fcombo{width:55px;height:28px;background:#fff;border:1px solid #e4e4e4;border-left:none;display:flex;align-items:center;justify-content:flex-end}
.fsearch{width:110px;height:28px;margin-left:3px;background:#fff;border:1px solid #e0e0e0;color:#b4b4b4;line-height:26px;padding-left:4px;font-size:15px;white-space:nowrap;overflow:hidden}
.chev{width:16px;height:10px;margin-left:8px;margin-top:-6px}
.fover{width:8px;height:5px;margin-left:8px;margin-top:6px}
.treewrap{height:370px;display:flex}
.tree{width:295px;background:#fff;flex:none}
.row{height:20px;display:flex;align-items:center;white-space:nowrap;position:relative;color:#555;font-size:12.7px}
.row.bold{font-weight:700;color:#333}
.l0{padding-left:7px}
.nub{position:absolute;left:0;top:5px;width:2px;height:10px;background:#c4c4c4}
.nub.g{background:#8bc34a}
.dash{width:6px;height:1px;border-top:1px dotted #999;flex:none;margin-bottom:2px}
.dash2{width:18px;height:22px;margin-left:20px;margin-top:-14px;border-left:1px dotted #999;border-bottom:1px dotted #999;flex:none}
.st{width:11px;height:11px;flex:none;margin-top:5px}
.ni{width:16px;height:16px;margin:0 8px 0 0;flex:none}
.picked{background:#e9e9e9;line-height:19px}
.scroll{width:19px;display:flex;flex-direction:column;flex:none;background:#f0f0f2}
.sbtn{height:21px;display:flex;align-items:center;justify-content:center;flex:none}
.schev{width:14px;height:10px}
.track{flex:1;position:relative}
.thumb{position:absolute;left:0;right:0;background:#c6c6c6}
.th-tree{top:32px;height:297px}
.th-detail{top:0;height:216px}
.detailwrap{flex:1;display:flex;min-height:0;overflow:hidden}
.details{width:293px;background:#fff;flex:none;margin-right:2px}
.drow{height:26.3px;display:flex;border-bottom:2px solid #b9b9b9;white-space:nowrap;color:#555;font-size:14px}
.details .drow:first-child{border-top:1px solid #ccc}
.dl{width:78px;border-right:2px solid #c6c6c6;line-height:26px;overflow:hidden;flex:none}
.dl.ind{padding-left:4px}
.dv{flex:1;padding-left:4px;line-height:26px}
.dv.gr{background:#e9e9e6}

/* toolbar */
.toolbar{height:34px;display:flex;align-items:center;flex:none;background:#f0f0f2;padding-left:15px;padding-bottom:2px;white-space:nowrap}
.vgrip{width:7px;height:26px;margin-right:5px;flex:none;background-image:radial-gradient(#bcbcbc .7px,transparent .8px);background-size:3px 3px}
.tb{width:28px;height:27px;display:flex;align-items:center;justify-content:center;flex:none;border:1px solid transparent}
.tb.on{border:1.5px solid #7fb2dc;background:#e9f1f8}
.ti{width:18px;height:18px;flex:none}
.m7{margin-left:7px}.m8{margin-left:8px}.m10{margin-left:10px}
.n16{width:16px}.n18{width:18px}.n22{width:22px}.n24{width:24px}.n27{width:27px}.n28{width:28px}.n29{width:29px}.n30{width:30px}
.w22{width:22px}.w26{width:26px}.w28{width:28px}.w40{width:40px}
.tsep{width:1px;height:26px;background:#d6d6d6;flex:none}
.ts-0{margin-left:2px}
.ts-a{margin:0 5px 0 7px}
.ts-c{margin:0 3px 0 10px}
.tt{flex:none;font-size:15.5px;color:#4d4d4d;white-space:nowrap}
.w57{width:57px}.w62{width:62px}.w66{width:66px}.w74{width:74px}.w82{width:82px}.w83{width:83px}.w89{width:89px}
.pl5{padding-left:5px}.pl8{padding-left:8px}.pl10{padding-left:10px}
.tover{width:8px;height:5px;margin-left:7px;margin-top:10px}
.tover.small{margin-left:3px}

/* viewport */
.viewport{height:582px;position:relative;overflow:hidden;flex:none;background:linear-gradient(#6289da,#fff)}
.anno{position:absolute;left:20px;top:20px;line-height:20px;font-size:13px;color:#26355f;white-space:nowrap}
.anno-b{font-weight:700;color:#1d2540}
.legend{position:absolute;left:20px;top:189px;display:flex}
.lbar{width:21px;height:203px;border:1px solid #223;display:flex;flex-direction:column}
.lbar i{flex:1;display:block;border-bottom:1px solid #556}
.lbar i:last-child{border-bottom:none}
.c1{background:#ff1c00}.c2{background:#ffa800}.c3{background:#ffee00}.c4{background:#b4e020}.c5{background:#0ccc10}.c6{background:#00dca0}.c7{background:#00e6f0}.c8{background:#00a4f0}.c9{background:#0000f0}
.lvals{display:flex;flex-direction:column;justify-content:space-between;margin:-10px 0 0 9px;height:221px;font-size:13.3px;line-height:22.1px;color:#223;white-space:nowrap}
.lvals b{color:#18202e;font-size:14px}
.model{position:absolute;left:0;top:0;width:1408px;height:582px}
.scalebar text{font:13.5px "Open Sans",sans-serif;fill:#223}
.zlabel{font:15px "Open Sans",sans-serif;fill:#2035c0}
.logo{position:absolute;right:0;top:30px;width:34px;overflow:hidden;color:#fff;white-space:nowrap}
.logo-a{font-weight:700;font-size:31px;line-height:34px}
.logo-v{font-size:17px;line-height:22px;padding-left:22px;color:#eef}

/* bottom */
.bottom{height:208px;display:flex;flex:none;padding-top:1px}
.graph{width:1010px;flex:none;display:flex;flex-direction:column;margin-right:5px}
.ph-graph{height:27px;padding-left:6px}
.ph-graph .pb-close{margin-right:10px}
.anim{height:35px;display:flex;align-items:center;flex:none;padding-left:12px;white-space:nowrap}
.vgrip.g2{margin-right:14px;height:24px}
.ai{width:17px;height:17px;flex:none}
.ml1{margin-left:1px}.ml2{margin-left:2px}.ml4{margin-left:4px}.ml5{margin-left:5px}.ml6{margin-left:6px}.ml10{margin-left:10px}
.stop{display:block;width:15px;height:15px;background:#d9a11c;border:1px solid #6a5a20}
.acombo{height:29px;background:#fff;margin-left:5px;padding-left:5px;display:flex;align-items:center;justify-content:space-between;color:#555;font-size:15px;flex:none}
.a1{width:123px}.a2{width:122px;margin-left:3px}
.cycles{width:73px;height:29px;margin-left:7px;border:1px solid #dcdcdc;color:#aaa;padding-left:5px;line-height:27px;font-size:15px;flex:none;white-space:nowrap;overflow:hidden}
.chart{height:120px;background:#fff;flex:none}
.chartsvg{display:block;width:1010px;height:120px}
.mm{font:700 16.5px "Open Sans",sans-serif;fill:#222}
.gtabs{height:25px;display:flex;flex:none}
.gtab{padding:0 8px;line-height:24px;font-size:15.5px;color:#666}
.gtab.cur{color:#3d8fc8;background:#f8f8f8;margin-left:2px}
.tabular{flex:1;display:flex;flex-direction:column;min-width:0}
.ph-tab{height:27px;padding-left:7px}
.tdata{flex:1;display:flex;flex-direction:column;min-height:0}
.thr,.tbr{display:flex;flex:none;white-space:nowrap}
.thr{height:23px;background:#f4f4f4;line-height:22px;font-size:14.5px;letter-spacing:-.25px}
.tbr{height:22px;background:#edede9;line-height:21px;border-bottom:1px solid #bbb;color:#444;font-size:13.5px}
.tc{border-right:1px solid #c4c4c4;padding-left:4px;overflow:hidden;flex:none}
.c0{width:18px;background:#e8e8e8;padding-left:6px}
.c1w{width:62px}.c2w{width:138px}.c3w{width:140px}.c4w{width:40px;border-right:none}
.tck{display:inline-block;width:15px;height:15px;border:1px solid #999;border-right-color:#eee;border-bottom-color:#eee;background:#fff;color:#222;font-size:9px;line-height:13px;text-align:center;margin-right:5px;vertical-align:1px;letter-spacing:0}
.red{color:#d8403a}.grn{color:#2f9a50}.blu{color:#3050c0}
.tempty{flex:1;background:#a0a0a0}

/* status */
.status{height:28px;flex:none;background:#0070c8;border-bottom:1px solid #78b4e6;display:flex;align-items:center;padding-left:1102px;color:#d4e9fb;font-size:16px;white-space:nowrap}
.si3{width:20px;height:18px;margin-right:3px;flex:none}
.st-t{flex:none}
.s-msg{width:123px}.s-sel{width:124px}.s-met{width:239px}.s-deg{width:81px}
.st-tri{width:14px;height:0;flex:none;position:relative;top:-3px}
.st-tri::before{content:"";display:block;width:0;height:0;border-left:6px solid transparent;border-right:6px solid transparent;border-bottom:6px solid #eaf4ff}

/* taskbar */
.taskbar{height:50px;flex:none;position:relative;display:flex;background:linear-gradient(90deg,#223340,#1b2839);padding-left:33px}
.searchring{position:absolute;left:-8px;top:14px;width:11px;height:16px;border:1px solid #ccc;border-radius:50%}
.appi{width:51px;height:50px;margin-right:11px;display:flex;align-items:flex-start;justify-content:center;padding-top:9px;border-bottom:3px solid #6aa0d0;flex:none}
.appi svg{width:30px;height:30px}
.appi.act{width:60px;margin-left:-5px;margin-right:0;background:#4d5d68}
.pdf{font:italic 700 12px "Open Sans",sans-serif;fill:#ffe6c8}
.ppt{font:700 11px "Open Sans",sans-serif;fill:#fff}
.wb{font:700 13px "Open Sans",sans-serif;fill:#f2f2f2}
.tray{margin-left:auto;display:flex;align-items:center;height:50px;padding-bottom:6px;color:#e8e8e8}
.tr-chev{width:17px;height:10px;margin-right:12px}
.tr-cloud{width:23px;height:14px;margin-right:8px}
.tr-bat{width:22px;height:14px;margin-right:9px}
.tr-wifi{width:20px;height:16px;margin-right:9px}
.tr-vol{width:20px;height:16px;margin-right:10px}
.ime{width:18px;font-size:17px;line-height:20px;font-family:"Noto Sans CJK SC",sans-serif;margin-right:19px}
.ime2{width:18px;height:18px;background:#f2f2f2;color:#222;font-size:14px;line-height:18px;text-align:center;font-family:"Noto Sans CJK SC",sans-serif;margin-right:14px}
.clock{width:63px;overflow:hidden;white-space:nowrap;font-size:14.5px;line-height:23px;margin-top:4px;color:#e4e4e4}
.ck-t{padding-left:26px}
.ck-d{padding-left:10px}

/* captions */
.captions{position:absolute;left:0;right:0;top:895px;text-align:center;font-family:"Noto Sans CJK SC",sans-serif;font-size:38.5px;line-height:44px;font-weight:500;color:#fff;-webkit-text-stroke:2.6px #2f2f2f;paint-order:stroke fill;pointer-events:none}
```
FILE: script.js
```js
(function () {
  var NS = 'http://www.w3.org/2000/svg';
  var root = document.getElementById('mesh');

  function lerp(a, b, t) { return [a[0] + (b[0] - a[0]) * t, a[1] + (b[1] - a[1]) * t]; }
  function pt(q, u, v) { return lerp(lerp(q[0], q[1], u), lerp(q[3], q[2], u), v); }
  function s(p) { return p[0].toFixed(1) + ' ' + p[1].toFixed(1); }

  function add(tag, attrs) {
    var el = document.createElementNS(NS, tag);
    for (var k in attrs) el.setAttribute(k, attrs[k]);
    root.appendChild(el);
  }

  function face(q, cols, rows, bands, line, width) {
    bands.forEach(function (b) {
      var d = 'M' + s(pt(q, 0, b[0])) + 'L' + s(pt(q, 1, b[0])) + 'L' + s(pt(q, 1, b[1])) + 'L' + s(pt(q, 0, b[1])) + 'Z';
      add('path', { d: d, fill: b[2] });
    });
    var lines = '';
    var i;
    for (i = 0; i <= cols; i++) lines += 'M' + s(pt(q, i / cols, 0)) + 'L' + s(pt(q, i / cols, 1));
    for (i = 0; i <= rows; i++) lines += 'M' + s(pt(q, 0, i / rows)) + 'L' + s(pt(q, 1, i / rows));
    add('path', { d: lines, stroke: line, 'stroke-width': width, fill: 'none' });
  }

  /* lower plate */
  face([[581, 400], [1504, 468], [1311, 517], [388, 449]], 64, 24, [[0, 1, '#841100']], '#120000', 2.3);
  face([[388, 449], [1311, 517], [1311, 597], [387, 528]], 64, 5, [[0, 1, '#8a1000']], '#1a0300', 1.2);
  face([[1311, 517], [1504, 468], [1503, 548], [1311, 597]], 24, 5, [[0, 1, '#dc2000']], '#2e0600', 1.1);

  /* upper block */
  face([[713, 339], [1315, 385], [1182, 420], [579, 373]], 42, 17, [[0, 1, '#000f70']], '#00000f', 2.3);
  face([[579, 373], [1182, 420], [1182, 497], [578, 452]], 42, 5, [
    [0, .13, '#000f9a'], [.13, .24, '#00509c'], [.24, .36, '#006f98'],
    [.36, .64, '#00808a'], [.64, .74, '#00704a'], [.74, .88, '#007c06'], [.88, 1, '#6f8c00']
  ], '#000f0a', 1.2);
  face([[1182, 420], [1315, 385], [1315, 465], [1182, 497]], 17, 5, [
    [0, .13, '#0008e0'], [.13, .3, '#0078d4'], [.3, .55, '#00b8d8'],
    [.55, .7, '#00c4a0'], [.7, .88, '#00c400'], [.88, 1, '#a8dc00']
  ], '#001210', 1.1);
})();
```
